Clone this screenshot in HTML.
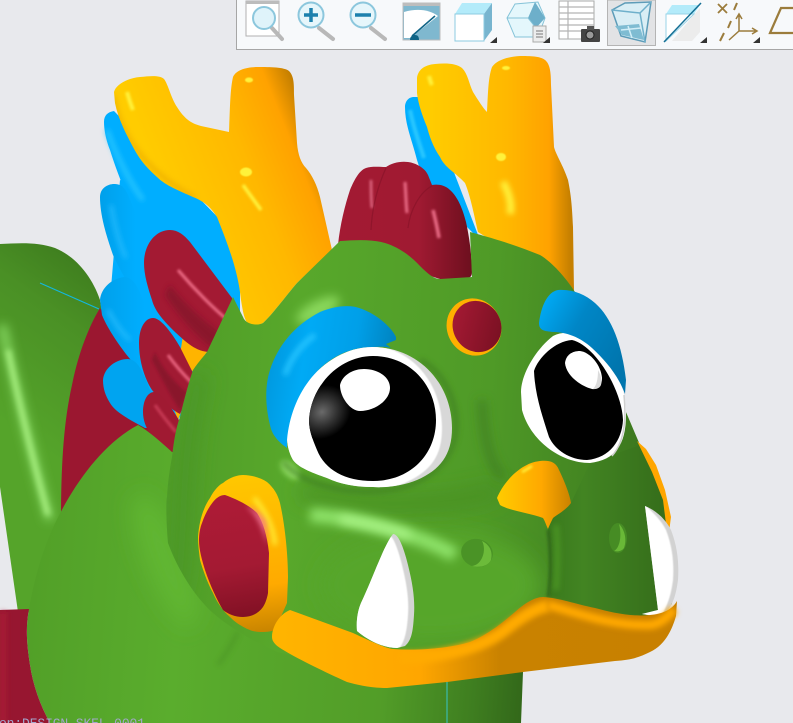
<!DOCTYPE html>
<html><head><meta charset="utf-8"><style>
html,body{margin:0;padding:0;background:#e8e9ed}
body{width:793px;height:723px;overflow:hidden;position:relative}
svg{position:absolute;left:0;top:0;display:block}
</style></head><body>
<svg width="793" height="723" viewBox="0 0 793 723" xmlns="http://www.w3.org/2000/svg">
<defs>
<filter id="b05" filterUnits="userSpaceOnUse" x="0" y="0" width="793" height="723"><feGaussianBlur stdDeviation=".6"/></filter>
<filter id="b1" filterUnits="userSpaceOnUse" x="0" y="0" width="793" height="723"><feGaussianBlur stdDeviation="1.3"/></filter>
<filter id="b2" filterUnits="userSpaceOnUse" x="0" y="0" width="793" height="723"><feGaussianBlur stdDeviation="2.6"/></filter>
<filter id="b3" filterUnits="userSpaceOnUse" x="0" y="0" width="793" height="723"><feGaussianBlur stdDeviation="5"/></filter>
<filter id="b4" filterUnits="userSpaceOnUse" x="0" y="0" width="793" height="723"><feGaussianBlur stdDeviation="10"/></filter>
<linearGradient id="wing" gradientUnits="userSpaceOnUse" x1="0" y1="420" x2="100" y2="280"><stop offset="0" stop-color="#55a42a"/><stop offset=".7" stop-color="#4a9025"/><stop offset="1" stop-color="#40801f"/></linearGradient>
<linearGradient id="body" gradientUnits="userSpaceOnUse" x1="30" y1="600" x2="525" y2="640"><stop offset="0" stop-color="#52a028"/><stop offset=".3" stop-color="#5aad2d"/><stop offset=".72" stop-color="#529d28"/><stop offset=".9" stop-color="#3f7f20"/><stop offset="1" stop-color="#33691a"/></linearGradient>
<linearGradient id="head" gradientUnits="userSpaceOnUse" x1="170" y1="400" x2="660" y2="430"><stop offset="0" stop-color="#4f9c27"/><stop offset=".25" stop-color="#58a82b"/><stop offset=".65" stop-color="#4f9a27"/><stop offset=".85" stop-color="#448622"/><stop offset="1" stop-color="#39731d"/></linearGradient>
<linearGradient id="ant1" gradientUnits="userSpaceOnUse" x1="170" y1="210" x2="320" y2="150"><stop offset="0" stop-color="#ffcc00"/><stop offset=".55" stop-color="#ffb800"/><stop offset=".85" stop-color="#ffa200"/><stop offset="1" stop-color="#c68000"/></linearGradient>
<linearGradient id="ant2" gradientUnits="userSpaceOnUse" x1="430" y1="170" x2="570" y2="170"><stop offset="0" stop-color="#ffcc00"/><stop offset=".55" stop-color="#ffb800"/><stop offset=".85" stop-color="#ffa200"/><stop offset="1" stop-color="#c68000"/></linearGradient>
<linearGradient id="nose" x1="0" y1="0" x2="1" y2="0"><stop offset="0" stop-color="#ffcc00"/><stop offset=".6" stop-color="#ffa800"/><stop offset="1" stop-color="#c98200"/></linearGradient>
<linearGradient id="lip" gradientUnits="userSpaceOnUse" x1="280" y1="640" x2="680" y2="640"><stop offset="0" stop-color="#ffb400"/><stop offset=".35" stop-color="#ffa600"/><stop offset=".55" stop-color="#c98200"/><stop offset="1" stop-color="#c88000"/></linearGradient>
<linearGradient id="cheekY" gradientUnits="userSpaceOnUse" x1="240" y1="480" x2="260" y2="632"><stop offset="0" stop-color="#ffc600"/><stop offset=".7" stop-color="#ffaa00"/><stop offset="1" stop-color="#c98500"/></linearGradient>
<linearGradient id="cheekR" gradientUnits="userSpaceOnUse" x1="230" y1="500" x2="250" y2="620"><stop offset="0" stop-color="#ad1b36"/><stop offset=".55" stop-color="#a41a33"/><stop offset="1" stop-color="#7f1023"/></linearGradient>
<linearGradient id="red1" x1="0" y1="0" x2="1" y2="0"><stop offset="0" stop-color="#a31a33"/><stop offset=".6" stop-color="#a01a32"/><stop offset="1" stop-color="#6d0f1e"/></linearGradient>
<linearGradient id="dot" x1="0" y1="0" x2="1" y2="1"><stop offset="0" stop-color="#ab1b36"/><stop offset="1" stop-color="#730f20"/></linearGradient>
<linearGradient id="blue" x1="0" y1="0" x2="1" y2="0"><stop offset="0" stop-color="#00a0ea"/><stop offset=".5" stop-color="#00aeff"/><stop offset="1" stop-color="#00aeff"/></linearGradient>
<linearGradient id="brow1" gradientUnits="userSpaceOnUse" x1="270" y1="340" x2="390" y2="360"><stop offset="0" stop-color="#0098de"/><stop offset=".3" stop-color="#00aaf5"/><stop offset=".7" stop-color="#009fe8"/><stop offset="1" stop-color="#0085c2"/></linearGradient>
<linearGradient id="brow2" gradientUnits="userSpaceOnUse" x1="540" y1="310" x2="625" y2="360"><stop offset="0" stop-color="#00a8f2"/><stop offset=".4" stop-color="#0086c6"/><stop offset="1" stop-color="#0075ad"/></linearGradient>
<linearGradient id="muz" gradientUnits="userSpaceOnUse" x1="550" y1="560" x2="660" y2="560"><stop offset="0" stop-color="#3a7a1d"/><stop offset=".3" stop-color="#428422"/><stop offset="1" stop-color="#366f1b"/></linearGradient>
<radialGradient id="glare" cx=".5" cy=".5" r=".5"><stop offset="0" stop-color="#6a6a6a"/><stop offset=".5" stop-color="#333"/><stop offset="1" stop-color="#000"/></radialGradient>
<clipPath id="ant1c"><path d="M114 92C116 84 128 78 140 77C150 76 160 75 164 79C168 84 171 98 177 107C184 118 190 123 201 126L229 132C230 110 230 90 233 77C236 70 246 67 258 67C270 67 284 67 289 71C294 76 294 84 294 95L297 143C298 155 301 163 306 168C312 175 317 185 320 197L332 250L297 283C285 297 272 315 263 323C258 326 252 326 249 325C244 320 243 312 241 300C238 270 228 245 217 217C210 206 203 201 193 197C180 191 166 186 157 177C146 167 140 160 133 147C125 132 118 118 115 103Z"/></clipPath>
<clipPath id="ant2c"><path d="M417 78C418 70 424 65 435 64C445 63 456 63 462 68C468 74 469 84 473 92C478 100 483 108 487 112C488 95 488 78 492 67C497 60 507 57 520 56C530 56 540 56 545 60C550 64 551 72 551 85L554 147C556 155 563 165 568 180C571 195 572 205 573 227L574 292L478 232C473 210 470 195 465 183C455 172 445 168 440 157C433 147 429 135 427 127C422 115 418 103 417 93Z"/></clipPath>
<clipPath id="headc"><path d="M340 241C355 240 372 239 385 243C398 247 410 255 420 266C428 274 434 279 440 279L472 277L470 232C500 240 520 247 540 255C552 262 566 278 575 292L640 445L665 495L672 600L545 640L447 670L330 665L277 652C255 642 230 628 213 613C195 597 178 570 168 543C166 520 166 500 167 497C168 480 170 468 172 457C174 440 176 428 180 417C184 400 188 385 193 370C200 360 204 356 207 352L233 297L243 317C246 325 258 326 263 323C272 315 285 297 297 283Z"/></clipPath>
<clipPath id="eyeL"><path d="M287 437C288 390 330 347 372 347C420 347 452 385 452 428C452 455 440 470 417 480C405 485 388 488 373 487C355 487 340 484 327 478C310 472 298 467 293 460C289 453 287 445 287 437Z"/></clipPath>
<clipPath id="pupL"><path d="M309 420C311 385 340 356 373 356C410 356 436 385 436 420C436 455 410 481 373 481C345 481 325 470 317 450C312 438 309 430 309 420Z"/></clipPath>
<clipPath id="fang1"><path d="M393 534C398 534 403 545 408 565C413 585 415 600 414 615C413 630 412 640 405 646L397 648C385 648 370 642 357 631C356 620 358 610 361 603C372 580 384 545 393 534Z"/></clipPath>
<clipPath id="fang2"><path d="M645 506C655 510 665 518 671 530C678 548 679 565 678 580C676 595 673 605 666 612L660 617L642 614L658 610Z"/></clipPath>
</defs>

<!-- wing -->
<path d="M0 244C20 243 38 242 55 248C75 256 92 276 100 300L120 420L100 600L28 612L18 612L0 487Z" fill="url(#wing)"/>
<path d="M2 325C12 370 30 450 50 520" stroke="#84d660" stroke-width="9" fill="none" filter="url(#b3)"/>
<path d="M8 350C14 380 30 450 48 515" stroke="#a8f080" stroke-width="5" fill="none" filter="url(#b2)"/>
<!-- back red -->
<path d="M100 308L140 370L175 425L175 470L100 480L61 525C61 470 63 425 72 385C78 355 88 328 100 308Z" fill="#9b1730"/>

<!-- blue feathers -->
<path d="M120 180L240 240L238 330L190 400L175 425L145 428L133 362L110 300Z" fill="#00aeff"/>
<path d="M104 122C104 115 108 112 114 111L240 240L240 330L190 345L160 290C150 265 142 245 136 222C128 198 116 170 110 150C106 140 104 130 104 122Z" fill="#00aeff"/>
<path d="M100 197C100 188 108 184 114 184C120 184 124 186 128 195L172 300L160 320L140 300C128 285 120 270 113 255C106 235 100 215 100 197Z" fill="url(#blue)"/>
<path d="M100 300C101 288 112 278 125 277C135 278 140 290 150 320L190 370L170 420L140 370C125 355 108 330 102 315Z" fill="url(#blue)"/>
<path d="M103 380C104 368 116 359 128 359C138 360 142 370 150 390L175 425L145 428C130 420 115 412 110 403C105 395 103 388 103 380Z" fill="#00a4f0"/>
<path d="M107 130C114 150 128 180 143 200" stroke="#2cc8ff" stroke-width="4" fill="none" filter="url(#b2)"/>
<path d="M111 205C114 225 120 245 126 258" stroke="#2cc0ff" stroke-width="3" fill="none" filter="url(#b2)"/>
<path d="M108 310C116 325 124 335 130 340" stroke="#2cc0ff" stroke-width="3" fill="none" filter="url(#b2)"/>
<!-- right blue -->
<path d="M405 107C405 102 408 97 414 97L425 97L480 240L425 185L417 160C412 140 405 125 405 107Z" fill="#00aeff"/>
<path d="M410 110C413 125 418 140 424 158" stroke="#2cc8ff" stroke-width="4" fill="none" filter="url(#b1)"/>

<!-- yellow bits -->
<path d="M183 335L207 352L193 372L180 355Z" fill="#ffb400"/>
<path d="M172 403L181 412L178 420Z" fill="#ffb400"/>

<!-- red feathers -->
<path d="M144 263C144 245 155 230 170 230C178 230 184 235 190 242L232 298C233 310 232 320 230 327L210 352C196 352 186 342 175 332C165 322 155 312 152 300C148 288 144 275 144 263Z" fill="#a31a33"/>
<path d="M165 295C178 315 195 335 212 348L222 334C205 322 185 305 170 285Z" fill="#85132a" opacity=".8" filter="url(#b2)"/>
<path d="M178 270C195 290 215 310 230 322" stroke="#ee6c86" stroke-width="3" fill="none" filter="url(#b1)"/>
<path d="M139 343C139 328 145 318 153 318C160 318 170 330 180 347L193 373L190 393L180 414C172 410 160 400 152 390C144 378 139 360 139 343Z" fill="#a11a33"/>
<path d="M152 360C160 375 170 395 180 410L187 393C172 380 162 368 155 352Z" fill="#85132a" opacity=".8" filter="url(#b1)"/>
<path d="M168 355C175 365 184 375 192 383" stroke="#ea6580" stroke-width="3" fill="none" filter="url(#b1)"/>
<path d="M143 412C143 400 148 392 154 392C160 392 170 405 179 420L173 452C165 445 155 440 150 433C146 428 143 420 143 412Z" fill="#a01a32"/>
<path d="M155 405C162 415 170 425 176 432" stroke="#c83a55" stroke-width="3" fill="none" filter="url(#b1)"/>

<!-- crest -->
<path d="M338 245C340 225 345 205 350 190C355 178 360 170 366 168C372 166 380 167 386 167C392 163 400 161 408 162C416 163 425 168 428 175L432 185C438 184 445 185 450 190C458 197 463 210 466 222C470 240 472 260 472 272C472 278 468 279 460 279C450 280 445 280 440 279L380 260Z" fill="url(#red1)"/>
<path d="M371 180C371 190 371 200 372 208" stroke="#e06a84" stroke-width="2.500" fill="none" filter="url(#b1)"/>
<path d="M405 182C406 195 406 205 407 213" stroke="#ea6c86" stroke-width="3" fill="none" filter="url(#b1)"/>
<path d="M433 210C436 222 438 232 439 238" stroke="#ea6c86" stroke-width="3.500" fill="none" filter="url(#b1)"/>
<path d="M371 230C372 210 376 190 386 168M408 228C410 210 420 192 432 186" stroke="#7d1024" stroke-width="1.200" fill="none" opacity=".5"/>

<!-- antlers -->
<path d="M114 92C116 84 128 78 140 77C150 76 160 75 164 79C168 84 171 98 177 107C184 118 190 123 201 126L229 132C230 110 230 90 233 77C236 70 246 67 258 67C270 67 284 67 289 71C294 76 294 84 294 95L297 143C298 155 301 163 306 168C312 175 317 185 320 197L332 250L297 283C285 297 272 315 263 323C258 326 252 326 249 325C244 320 243 312 241 300C238 270 228 245 217 217C210 206 203 201 193 197C180 191 166 186 157 177C146 167 140 160 133 147C125 132 118 118 115 103Z" fill="url(#ant1)"/>
<g clip-path="url(#ant1c)">
<path d="M113 95C118 125 135 165 195 198" stroke="#e09a00" stroke-width="4" fill="none" opacity=".5" filter="url(#b2)"/>
<path d="M127 92C129 99 131 105 133 110" stroke="#fff23a" stroke-width="4" fill="none" filter="url(#b1)"/>
<ellipse cx="249" cy="80" rx="4" ry="2.500" fill="#fff23a" filter="url(#b05)"/>
<ellipse cx="246" cy="172" rx="6" ry="4.500" fill="#fff23a" filter="url(#b05)"/>
<path d="M243 185C250 195 256 203 261 210" stroke="#fff23a" stroke-width="3.500" fill="none" filter="url(#b1)"/>
</g>
<path d="M417 78C418 70 424 65 435 64C445 63 456 63 462 68C468 74 469 84 473 92C478 100 483 108 487 112C488 95 488 78 492 67C497 60 507 57 520 56C530 56 540 56 545 60C550 64 551 72 551 85L554 147C556 155 563 165 568 180C571 195 572 205 573 227L574 292L478 232C473 210 470 195 465 183C455 172 445 168 440 157C433 147 429 135 427 127C422 115 418 103 417 93Z" fill="url(#ant2)"/>
<g clip-path="url(#ant2c)">
<path d="M429 76C430 80 431 83 432 85" stroke="#fff23a" stroke-width="4" fill="none" filter="url(#b1)"/>
<ellipse cx="506" cy="68" rx="4" ry="2" fill="#fff23a" filter="url(#b05)"/>
<ellipse cx="501" cy="157" rx="5" ry="4" fill="#fff23a" filter="url(#b05)"/>
<path d="M503 182C510 195 512 205 510 214" stroke="#fff23a" stroke-width="7" fill="none" filter="url(#b2)"/>
</g>

<!-- body -->
<path d="M52 530C70 490 100 445 138 425C150 432 162 443 172 452L300 450L523 600L523 672L521 723L50 723C40 705 33 685 30 665C26 640 26 625 29 609C34 580 42 552 52 530Z" fill="url(#body)"/>
<ellipse cx="165" cy="560" rx="20" ry="70" fill="#60b632" filter="url(#b4)" transform="rotate(-22 165 560)"/>
<path d="M238 632C232 645 225 655 218 665" stroke="#448a22" stroke-width="4" fill="none" opacity=".45" filter="url(#b2)"/>
<!-- red bottom-left -->
<path d="M0 610L29 609C26 625 26 640 30 665C33 685 40 705 50 723L0 723Z" fill="#971630"/>
<path d="M0 612L6 612L6 723L0 723Z" fill="#a81c36" filter="url(#b2)"/>
<text x="-1" y="727" font-family="Liberation Mono, monospace" font-size="13" fill="#a3a6cc" textLength="146" lengthAdjust="spacing">on:DESIGN_SKEL_0001</text>
<rect x="446.500" y="680" width="1" height="43" fill="#39c4c8"/>

<!-- head -->
<path d="M340 241C355 240 372 239 385 243C398 247 410 255 420 266C428 274 434 279 440 279L472 277L470 232C500 240 520 247 540 255C552 262 566 278 575 292L640 445L665 495L672 600L545 640L447 670L330 665L277 652C255 642 230 628 213 613C195 597 178 570 168 543C166 520 166 500 167 497C168 480 170 468 172 457C174 440 176 428 180 417C184 400 188 385 193 370C200 360 204 356 207 352L233 297L243 317C246 325 258 326 263 323C272 315 285 297 297 283Z" fill="url(#head)"/>
<g clip-path="url(#headc)">
<ellipse cx="430" cy="585" rx="110" ry="55" fill="#56a62b" filter="url(#b4)"/>
<path d="M300 490C350 508 450 508 500 490" stroke="#468d23" stroke-width="16" fill="none" filter="url(#b4)" opacity=".8"/>
<path d="M310 515C360 518 420 535 455 555" stroke="#8fe46a" stroke-width="14" fill="none" filter="url(#b3)"/>
<path d="M340 519C365 523 390 529 410 536" stroke="#b2fa90" stroke-width="7" fill="none" filter="url(#b3)"/>
<path d="M482 400C484 440 490 465 503 478" stroke="#3f7f20" stroke-width="7" fill="none" filter="url(#b3)"/>
<ellipse cx="318" cy="310" rx="24" ry="9" fill="#8ad85c" filter="url(#b3)" transform="rotate(-28 318 310)"/>
<ellipse cx="290" cy="470" rx="12" ry="6" fill="#94e068" filter="url(#b2)" transform="rotate(45 290 470)"/>
<path d="M172 600C190 560 175 480 200 375" stroke="#4a9426" stroke-width="14" fill="none" filter="url(#b4)"/>
</g>
<!-- right muzzle -->
<path d="M548 528L553 518L571 503L590 463L640 445L665 495L669 530L672 604L650 620L548 625C551 575 551 550 548 528Z" fill="url(#muz)"/>
<path d="M548 530C551 555 551 575 548 598" stroke="#33691a" stroke-width="3" fill="none" filter="url(#b1)"/>
<path d="M556 525C558 545 558 565 556 590" stroke="#52a028" stroke-width="5" fill="none" filter="url(#b2)" opacity=".7"/>
<path d="M637 441L646 449L656 465L665 490L671 517L668 540L663 500L652 472Z" fill="#ffa600"/>

<!-- left eye -->
<path d="M283 462C300 482 340 494 380 491C420 488 456 465 456 425C456 395 440 370 420 360" stroke="#3f7f20" stroke-width="5" fill="none" filter="url(#b2)" opacity=".7"/>
<g clip-path="url(#eyeL)">
<rect x="280" y="340" width="180" height="155" fill="#d8d8d8"/>
<path d="M280 437C281 390 323 345 365 345C413 345 442 385 442 428C442 455 432 470 407 482C395 488 380 490 366 490C348 490 333 484 320 478C303 472 291 467 286 460C282 453 280 445 280 437Z" fill="#fff" filter="url(#b05)"/>
<g clip-path="url(#pupL)">
<rect x="300" y="350" width="140" height="135" fill="#000"/>
<ellipse cx="322" cy="412" rx="30" ry="26" fill="url(#glare)" transform="rotate(-30 322 412)"/>
</g>
</g>
<path d="M340 385C342 376 352 369 364 369C378 369 390 377 390 388C390 400 375 411 360 411C350 411 340 397 340 385Z" fill="#fff"/>
<!-- left brow -->
<path d="M287 448C280 443 272 436 270 425C265 405 265 385 270 370C278 345 295 325 320 312C335 306 350 304 362 309C378 315 392 328 396 337L396 340L386 344L391 348C384 346 378 347 372 347C330 347 292 385 287 440Z" fill="url(#brow1)"/>
<path d="M285 375C290 360 300 345 315 335" stroke="#26c4ff" stroke-width="5" fill="none" filter="url(#b2)"/>

<!-- dot -->
<ellipse cx="474" cy="327" rx="27" ry="29" fill="#ffb000" transform="rotate(-28 474 327)"/>
<ellipse cx="477" cy="326.500" rx="24" ry="26" fill="url(#dot)" transform="rotate(-28 477 326.500)"/>

<!-- right eye -->
<path d="M521 392C521 375 535 350 553 336C565 330 578 333 590 340C610 355 627 385 626 415C626 445 615 460 590 463C560 463 530 440 522 410Z" fill="#fff"/>
<path d="M534 371C538 358 555 341 572 340C595 345 622 390 623 420C622 440 610 458 587 460C570 460 555 450 549 437C542 415 535 395 534 371Z" fill="#000"/>
<path d="M624 395C626 415 626 440 612 456" stroke="#cfcfcf" stroke-width="1.500" fill="none"/>
<path d="M565 363C566 355 572 351 580 351C590 352 601 365 602 378C602 386 598 390 592 389C580 386 566 375 565 363Z" fill="#fff"/>
<path d="M598 370C601 375 602 380 601 385C599 389 596 389 593 389C597 385 598 378 598 370Z" fill="#dcdcdc"/>
<!-- right brow -->
<path d="M539 323C541 307 547 292 558 290C572 289 585 294 595 303C612 318 622 345 626 380L625 394C618 375 605 360 592 348C580 337 566 332 553 332C545 331 539 331 539 323Z" fill="url(#brow2)"/>

<!-- nose -->
<path d="M497 498C503 483 520 463 540 461C550 460 556 462 559 470C564 480 570 495 571 503C566 510 558 514 553 518C551 522 549 526 548 529C546 525 545 521 543 518C530 513 510 511 500 505Z" fill="url(#nose)"/>
<path d="M532 466C529 468 526 470 522 472" stroke="#fff23a" stroke-width="2.500" fill="none" filter="url(#b1)"/>

<!-- nostrils -->
<ellipse cx="477" cy="553" rx="16" ry="14" fill="#4a9326" transform="rotate(15 477 553)"/>
<path d="M482 541C490 545 493 552 491 560C488 566 480 568 472 566C482 565 487 550 482 541Z" fill="#6cbb3a"/>
<ellipse cx="618" cy="538" rx="9" ry="15" fill="#468c24"/>
<path d="M619 524C625 530 627 540 624 548C622 551 618 552 614 551C620 548 622 535 619 524Z" fill="#69b837"/>

<!-- cheek -->
<path d="M198 537C199 522 203 508 210 498C214 490 220 484 223 483C230 477 238 475 243 475C252 475 261 478 267 482C274 488 278 495 280 503C285 525 288 555 288 577L287 603L275 630C270 632 265 632 260 632C252 632 245 628 240 625C235 622 232 619 230 617C222 610 217 602 213 593C207 582 203 570 200 560C199 552 198 545 198 537Z" fill="url(#cheekY)"/>
<path d="M254 498C266 512 274 530 275 545" stroke="#fff23a" stroke-width="4" fill="none" filter="url(#b2)"/>
<path d="M199 540C199 534 200 528 202 523C205 514 209 507 213 502C217 497 221 495 225 495C236 499 249 505 257 513C263 522 267 535 269 553L268 593C267 599 265 604 263 607C258 614 251 617 243 617C235 617 228 614 223 610C217 600 210 585 205 570C202 560 199 550 199 540Z" fill="url(#cheekR)"/>
<path d="M246 506C256 514 263 528 267 545L266 522C260 512 252 507 246 506Z" fill="#f57a96" opacity=".85" filter="url(#b2)"/>

<!-- fangs -->
<g clip-path="url(#fang1)"><rect x="350" y="530" width="70" height="125" fill="#d4d4d4"/><path d="M387 534C392 534 397 545 402 565C407 585 409 600 408 615C407 630 405 642 398 650L340 650L350 610Z" fill="#fff" filter="url(#b05)"/></g>
<g clip-path="url(#fang2)"><rect x="640" y="500" width="42" height="120" fill="#d2d2d2"/><path d="M640 500C650 510 660 518 666 530C673 548 674 565 673 580C671 595 668 605 660 618L640 620Z" fill="#fff" filter="url(#b05)"/></g>

<!-- lip -->
<path d="M272 637C272 628 278 615 290 610L353 633C370 641 385 648 393 649C420 651 450 648 470 642C485 636 500 625 515 612C525 603 535 597 543 597C560 598 575 604 595 608C610 612 630 617 650 615C662 614 672 610 677 601L676 616C672 630 665 645 650 652C640 657 632 660 615 661L523 672L447 682L387 688C370 688 358 685 347 682C325 672 300 660 285 651C276 646 272 642 272 637Z" fill="url(#lip)"/>
<path d="M400 658C435 658 480 650 505 630C520 618 535 608 548 606" stroke="#ffaa00" stroke-width="12" fill="none" filter="url(#b2)"/>
<path d="M548 605C575 612 610 626 650 625C660 624 668 617 674 609" stroke="#ffa800" stroke-width="9" fill="none" filter="url(#b2)"/>

<!-- cyan thin line -->
<path d="M40 283L99 309" stroke="#12b8e0" stroke-width="1" fill="none"/>

<!-- toolbar -->
<rect x="236.500" y="-2" width="560" height="51.500" fill="#f7f9fb" stroke="#a6a6a6" stroke-width="1"/>
<rect x="607.500" y="0" width="48" height="45.500" fill="#e2e3e5" stroke="#b4b4b4"/>
<g fill="none">
<rect x="246" y="1" width="33" height="35" fill="#fff" stroke="#b0b0b0"/><rect x="246" y="1" width="33" height="3" fill="#bcbcbc"/>
<line x1="272" y1="28" x2="282" y2="39" stroke="#b8b8b8" stroke-width="4" stroke-linecap="round"/>
<circle cx="264" cy="18" r="11" fill="#dff3fa" stroke="#8cc7dd" stroke-width="2"/>
<line x1="319" y1="28" x2="333" y2="39" stroke="#b8b8b8" stroke-width="4" stroke-linecap="round"/>
<circle cx="311" cy="15" r="12.500" fill="#e6f6fb" stroke="#8cc7dd" stroke-width="2"/>
<path d="M311 8V22M304 15H318" stroke="#1c80ad" stroke-width="3.500"/>
<line x1="371" y1="28" x2="385" y2="39" stroke="#b8b8b8" stroke-width="4" stroke-linecap="round"/>
<circle cx="363" cy="15" r="12.500" fill="#e6f6fb" stroke="#8cc7dd" stroke-width="2"/>
<path d="M355 15H371" stroke="#1c80ad" stroke-width="3.500"/>
</g>
<rect x="403" y="3" width="37" height="37" fill="#7fb8cf" stroke="#bdbdbd"/>
<rect x="403" y="3" width="37" height="3" fill="#bdbdbd"/>
<path d="M404 12C418 8 430 10 438 16L410 38H404Z" fill="#fff"/>
<path d="M412 36L435 16" stroke="#0f6486" stroke-width="1.500"/>
<path d="M410 40C410 36 413 35 415 35C418 35 419 37 419 40Z" fill="#0f6486"/>
<path d="M455 14L462 3H492L484 14Z" fill="#b3ebfa"/><path d="M484 14L492 3V30L484 41Z" fill="#78b5cf"/>
<rect x="455" y="14" width="29" height="27" fill="#fff" stroke="#8ccbe0"/>
<path d="M490 43L497 43L497 37Z" fill="#333"/>
<path d="M507 18L515 4L538 2L545 18L538 37L515 37Z" fill="#e4f7fc" stroke="#85c3d8"/>
<path d="M535 2L545 18L536 28L528 18Z" fill="#6dafca"/><path d="M507 18L528 18L536 28" fill="none" stroke="#85c3d8"/>
<rect x="533" y="26" width="13" height="16" fill="#eceded" stroke="#aaa"/>
<path d="M536 31H543M536 34H543M536 37H543" stroke="#777" stroke-width="1"/>
<path d="M543 43L550 43L550 37Z" fill="#333"/>
<rect x="559" y="1" width="35" height="38" fill="#fff" stroke="#aaa"/>
<path d="M559 7H594M559 13H594M559 19H594M559 25H594M559 31H594M568 1V39" stroke="#b4b4b4" stroke-width="1.200" fill="none"/>
<rect x="581" y="29" width="19" height="13" rx="1" fill="#444"/><rect x="587" y="26" width="7" height="4" fill="#555"/><circle cx="590" cy="35" r="4" fill="#999" stroke="#222"/>
<path d="M612 10L625 3L651 2L645 42L621 36Z" fill="#d9eef5" stroke="#5d9cb8" stroke-width="1.500"/>
<path d="M612 10L640 13L651 2M640 13L645 42" stroke="#6fb0cb" stroke-width="1.500" fill="none"/>
<path d="M615 26L639 24L644 40L622 35Z" fill="#7fbcd2"/>
<path d="M628 26L632 38M621 30L641 28" stroke="#d2eef7" stroke-width="1.500"/>
<path d="M666 14L672 5H700L694 14Z" fill="#b3ebfa"/>
<path d="M666 14H694L666 41Z" fill="#fff" stroke="#9ad3e7"/>
<path d="M693 16L700 8V32L692 41H672Z" fill="#ececec"/>
<line x1="664" y1="42" x2="701" y2="3" stroke="#146f94" stroke-width="1.500"/>
<path d="M700 43L707 43L707 37Z" fill="#333"/>
<path d="M718 4L727 13M727 4L718 13" stroke="#9b7c3c" stroke-width="1.800" fill="none"/>
<path d="M737 3L734 10M731 21L728 28M724 33L720 41" stroke="#9b7c3c" stroke-width="2" fill="none"/>
<path d="M739 15V31M739 31L756 31M739 31L729 40M736 19L739 14L742 19M752 28L757 31L752 34" stroke="#9b7c3c" stroke-width="1.500" fill="none"/>
<path d="M753 43L760 43L760 37Z" fill="#333"/>
<path d="M770 33L781 8H796V33Z" fill="none" stroke="#9b7c3c" stroke-width="2.200"/>
</svg>
</body></html>
